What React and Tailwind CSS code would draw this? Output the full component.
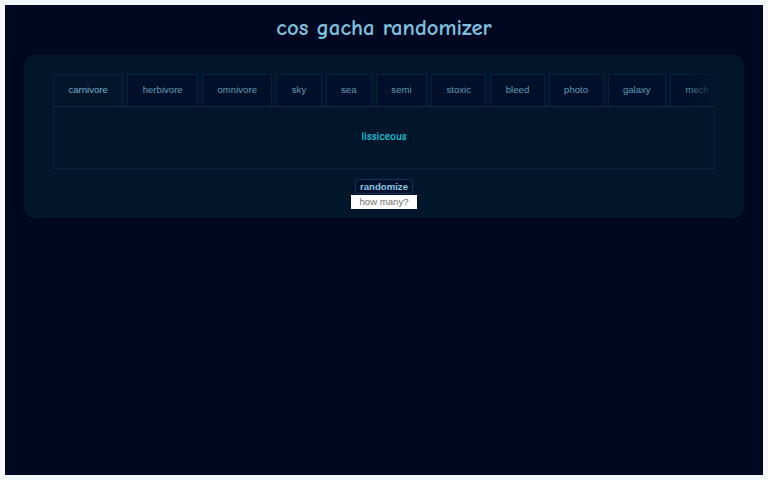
const tabs = ["carnivore", "herbivore", "omnivore", "sky", "sea", "semi", "stoxic", "bleed", "photo", "galaxy", "mech"];

const handFont = "font-['Comic_Neue','Patrick_Hand',cursive]";

export default function App() {
  return (
    <div className="h-[480px] w-[768px] overflow-hidden bg-[#f5f7fb] p-[5px] font-['Liberation_Sans',sans-serif]">
      <div className="flex h-[470px] flex-col items-center bg-[#000821]">
        <h1 className={`mt-[9px] h-[41px] text-[22.7px] leading-[28px] font-bold text-[#7fbfdc] ${handFont}`}>
          cos gacha randomizer
        </h1>

        <div className="flex h-[163px] w-[720px] flex-col items-center rounded-[10px] bg-[#01152b] px-[29px] pt-[19px]">
          <div className="w-full">
            {/* Tabs */}
            <div className="relative flex h-[33px] w-full gap-[4.05px] overflow-hidden border-b border-[#0b2c4d]">
              {tabs.map((tab, i) => (
                <div
                  key={tab}
                  className={`flex h-[33px] shrink-0 items-center border border-[#08233d] px-[14.4px] text-[9.6px] ${
                    i === 0
                      ? "border-b-[#01152b] bg-[#01152b] text-[#74aec9]"
                      : "bg-[#00102a] text-[#6199b3]"
                  }`}
                >
                  {tab}
                </div>
              ))}
              <div className="absolute top-0 right-0 h-[32px] w-[30px] bg-gradient-to-r from-transparent to-[#01152b]" />
            </div>

            {/* Panel */}
            <div className="flex h-[62px] items-center justify-center border border-t-0 border-[#08233d]">
              <span className={`text-[11.3px] font-bold text-[#17c3d8] ${handFont}`}>lissiceous</span>
            </div>
          </div>

          <button className="mt-[10px] h-[15px] rounded-[2px] border border-[#0f3358] bg-[#00102a] px-[4px] text-[9.6px] leading-none font-bold text-[#8cc6e4]">
            randomize
          </button>
          <input
            placeholder="how many?"
            className="mt-[1px] h-[14px] w-[66px] bg-white text-center text-[9.6px] text-[#555] placeholder:text-[#6f6f6f]"
          />
        </div>
      </div>
    </div>
  );
}
